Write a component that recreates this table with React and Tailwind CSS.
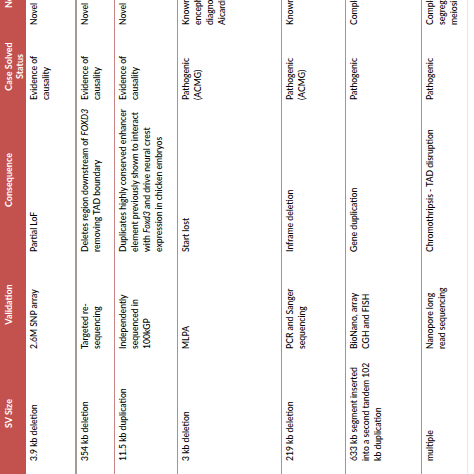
import React from 'react';

const COLS = 'grid grid-cols-[121px_97px_152px_75px_220px]';

const rows = [
  {
    h: 'h-[51px]',
    line: 'border-b-2 border-[#a59a96]',
    cells: [['3.9 kb deletion'], ['2.6M SNP array'], ['Partial LoF'], ['Evidence of', 'causality'], ['Novel']],
  },
  {
    h: 'h-[38px]',
    line: 'border-b border-[#c98586]',
    cells: [
      ['354 kb deletion'],
      ['Targeted re-', 'sequencing'],
      [<>Deletes region downstream of <i>FOXD3</i></>, 'removing TAD boundary'],
      ['Evidence of', 'causality'],
      ['Novel'],
    ],
  },
  {
    h: 'h-[63px]',
    line: 'border-b border-[#c98586]',
    cells: [
      ['11.5 kb duplication'],
      ['Independently', 'sequenced in', '100kGP'],
      [
        'Duplicates highly conserved enhancer',
        'element previously shown to interact',
        <>with <i>Foxd3</i> and drive neural crest</>,
        'expression in chicken embryos',
      ],
      ['Evidence of', 'causality'],
      ['Novel'],
    ],
  },
  {
    h: 'h-[104px]',
    line: 'border-b border-[#c98586]',
    cells: [
      ['3 kb deletion'],
      ['MLPA'],
      ['Start lost'],
      ['Pathogenic', '(ACMG)'],
      ['Known epileptic', 'encephalopathy', 'diagnosis in', 'Aicardi syndrome'],
    ],
  },
  {
    h: 'h-[64px]',
    line: 'border-b border-[#c98586]',
    cells: [
      ['219 kb deletion'],
      ['PCR and Sanger', 'sequencing'],
      ['Inframe deletion'],
      ['Pathogenic', '(ACMG)'],
      ['Known gene'],
    ],
  },
  {
    h: 'h-[76px]',
    line: 'border-b border-[#c98586]',
    cells: [
      ['633 kb segment inserted', 'into a second tandem 102', 'kb duplication'],
      ['BioNano, array', 'CGH and FISH'],
      ['Gene duplication'],
      ['Pathogenic'],
      ['Complex'],
    ],
  },
  {
    h: 'h-[46px]',
    line: 'border-b border-[#eee6e6]',
    cells: [
      ['multiple'],
      ['Nanopore long', 'read sequencing'],
      ['Chromothripsis - TAD disruption'],
      ['Pathogenic'],
      ['Complex', 'segregation at', 'meiosis'],
    ],
  },
];

function Cell({ lines, first }) {
  return (
    <div className={`pt-[2px] ${first ? 'pl-[13px]' : 'pl-[4px]'} pr-[2px] overflow-hidden`}>
      {lines.map((l, i) => (
        <div key={i} className="whitespace-nowrap leading-[12px]">{l}</div>
      ))}
    </div>
  );
}

export default function App() {
  const headers = [['SV Size'], ['Validation'], ['Consequence'], ['Case Solved', 'Status'], ['New/Known']];
  return (
    <div className="w-[474px] h-[474px] overflow-hidden bg-white">
      <div className="w-[474px] h-[474px] -rotate-90 overflow-hidden flex flex-col bg-white font-['Lato',sans-serif] text-[8.6px] font-medium text-black">
        {/* Header */}
        <div className={`${COLS} h-[26px] bg-[#c3514e] text-white text-[9px] font-bold shrink-0`}>
          {headers.map((h, i) => (
            <div key={i} className={`pt-[3px] overflow-hidden ${i === 4 ? 'text-left pl-[21px]' : 'text-center'}`}>
              {h.map((l, j) => (
                <div key={j} className="whitespace-nowrap leading-[11px]">{l}</div>
              ))}
            </div>
          ))}
        </div>

        {/* Body rows */}
        {rows.map((r, i) => (
          <div key={i} className={`${COLS} ${r.h} ${r.line} shrink-0`}>
            {r.cells.map((c, j) => (
              <Cell key={j} lines={c} first={j === 0} />
            ))}
          </div>
        ))}
      </div>
    </div>
  );
}
